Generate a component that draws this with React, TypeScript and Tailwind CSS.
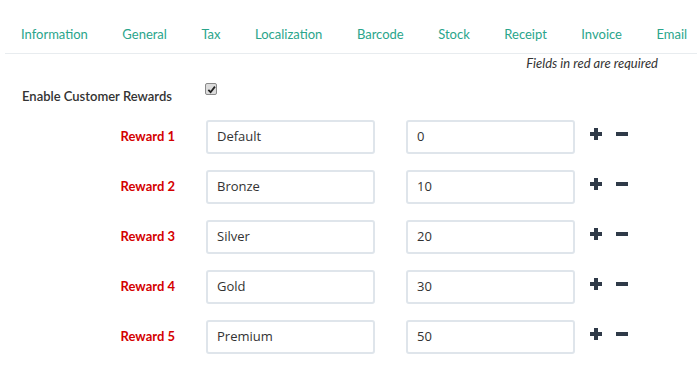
import React from "react";

const tabs = ["Information", "General", "Tax", "Localization", "Barcode", "Stock", "Receipt", "Invoice", "Email"];
const rows = [
  ["Reward 1", "Default", "0"],
  ["Reward 2", "Bronze", "10"],
  ["Reward 3", "Silver", "20"],
  ["Reward 4", "Gold", "30"],
  ["Reward 5", "Premium", "50"],
];

function Plus() {
  return (
    <svg width="12" height="12" viewBox="0 0 12 12">
      <rect x="4" y="0" width="4" height="12" fill="#2f3a48" />
      <rect x="0" y="4" width="12" height="4" fill="#2f3a48" />
    </svg>
  );
}
function Minus() {
  return (
    <svg width="12" height="12" viewBox="0 0 12 12">
      <rect x="0" y="4" width="12" height="4" fill="#2f3a48" />
    </svg>
  );
}

export default function App() {
  return (
    <div className="w-[697px] h-[370px] bg-white overflow-hidden" style={{ fontFamily: "Lato, 'Open Sans', sans-serif" }}>
      <div className="ml-[5px] h-[54px] border-b border-[#e8ecef] flex items-end pb-[9px] pl-[16px] gap-[34.5px] text-[13px] text-[#2aa58b] whitespace-nowrap">
        {tabs.map((t) => (
          <span key={t}>{t}</span>
        ))}
      </div>
      <div className="flex justify-end pr-[39px] mt-[1px] h-[17px] text-[13px] italic text-[#333] leading-[17px]">
        Fields in red are required
      </div>
      <div className="flex items-start mt-[11px] h-[24px]">
        <span className="ml-[22px] mt-[5px] text-[13px] font-semibold text-[#333] leading-[16px] w-[183px]">Enable Customer Rewards</span>
        <span className="w-[12px] h-[12px] mt-0 rounded-[2px] border border-[#8a8a8a] bg-[#dcdcdc] flex items-center justify-center">
          <svg width="9" height="9" viewBox="0 0 10 10">
            <path d="M1.5 5.5 L4 8 L8.8 1.8" stroke="#222" strokeWidth="2" fill="none" />
          </svg>
        </span>
      </div>
      <div className="mt-[13px] flex flex-col gap-[16px]">
        {rows.map(([label, name, val]) => (
          <div key={label} className="flex items-center h-[34px]">
            <span className="w-[175px] text-right text-[13px] font-bold text-[#d40000]">{label}</span>
            <div
              className="ml-[31px] w-[169px] h-[34px] border-2 border-[#dfe5eb] rounded-[3px] flex items-center pl-[9px] text-[13px] text-[#333]"
              style={{ fontFamily: "'Open Sans', sans-serif" }}
            >
              {name}
            </div>
            <div
              className="ml-[31px] w-[169px] h-[34px] border-2 border-[#dfe5eb] rounded-[3px] flex items-center pl-[9px] text-[13px] text-[#333]"
              style={{ fontFamily: "'Open Sans', sans-serif" }}
            >
              {val}
            </div>
            <div className="ml-[15px] flex items-center gap-[14px] mb-[7px]">
              <Plus />
              <Minus />
            </div>
          </div>
        ))}
      </div>
    </div>
  );
}
